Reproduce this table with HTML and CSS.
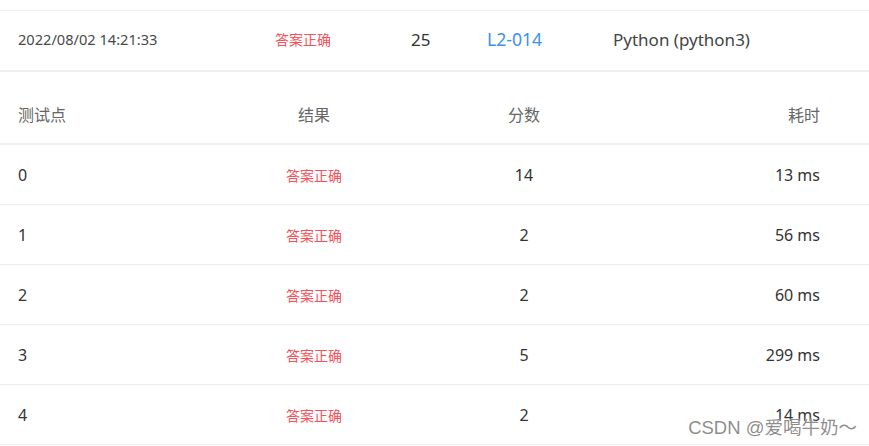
FILE: index.html
```html
<!DOCTYPE html>
<html lang="zh-CN">
<head>
<meta charset="utf-8">
<link rel="stylesheet" href="styles.css">
</head>
<body>
<div class="page">
  <div class="summary">
    <span class="date">2022/08/02 14:21:33</span>
    <span class="ok">答案正确</span>
    <span class="score">25</span>
    <span class="prob">L2-014</span>
    <span class="lang">Python (python3)</span>
  </div>
  <div class="table">
    <div class="row head">
      <span class="c1">测试点</span><span class="c2">结果</span><span class="c3">分数</span><span class="c4">耗时</span>
    </div>
    <div class="row">
      <span class="c1">0</span><span class="c2 ok">答案正确</span><span class="c3">14</span><span class="c4">13 ms</span>
    </div>
    <div class="row">
      <span class="c1">1</span><span class="c2 ok">答案正确</span><span class="c3">2</span><span class="c4">56 ms</span>
    </div>
    <div class="row">
      <span class="c1">2</span><span class="c2 ok">答案正确</span><span class="c3">2</span><span class="c4">60 ms</span>
    </div>
    <div class="row">
      <span class="c1">3</span><span class="c2 ok">答案正确</span><span class="c3">5</span><span class="c4">299 ms</span>
    </div>
    <div class="row">
      <span class="c1">4</span><span class="c2 ok">答案正确</span><span class="c3">2</span><span class="c4">14 ms</span>
    </div>
  </div>
  <div class="watermark">CSDN @爱喝牛奶～</div>
</div>
</body>
</html>
```

FILE: styles.css
```css
html, body {
  margin: 0;
  padding: 0;
  background: #fff;
}
.page {
  position: relative;
  width: 869px;
  height: 446px;
  overflow: hidden;
  padding-top: 10px;
  box-sizing: border-box;
  font-family: "Noto Sans", "Noto Sans CJK SC", sans-serif;
  color: #333;
}
.summary {
  display: grid;
  grid-template-columns: 257px 136px 76px 126px 1fr;
  align-items: center;
  height: 59px;
  box-sizing: border-box;
  padding-left: 18px;
  padding-bottom: 3px;
  border-top: 1px solid #eef0f3;
  border-bottom: 2px solid #eef0f3;
  height: 62px;
}
.summary .date {
  font-size: 14.6px;
  color: #4a4a4a;
}
.summary .ok {
  font-size: 14px;
}
.summary .score {
  font-size: 17px;
  color: #333;
}
.summary .prob {
  font-size: 17.6px;
  color: #3d90f0;
}
.summary .lang {
  font-size: 17px;
  color: #444;
}
.ok {
  color: #f5515a;
  font-family: "Noto Sans CJK SC", "Noto Sans", sans-serif;
}
.row {
  display: grid;
  grid-template-columns: 191px 210px 210px 191px;
  align-items: center;
  padding-left: 18px;
  height: 59px;
  border-bottom: 1px solid #ebedf0;
  font-size: 16px;
  color: #333;
}
.row.head {
  padding-top: 12px;
  box-sizing: border-box;
  height: 73px;
  color: #666;
  font-family: "Noto Sans CJK SC", "Noto Sans", sans-serif;
  border-bottom: 2px solid #eef0f3;
}
.row .ok {
  font-size: 14px;
}
.c1 { text-align: left; }
.c2 { text-align: center; }
.c3 { text-align: center; }
.c4 { text-align: right; }
.watermark {
  position: absolute;
  right: 12px;
  bottom: 7px;
  font-family: "Liberation Sans", "Noto Sans CJK SC", sans-serif;
  font-size: 18.5px;
  color: rgba(120, 120, 120, 0.85);
  text-shadow: 0 0 2px #fff;
}
```
